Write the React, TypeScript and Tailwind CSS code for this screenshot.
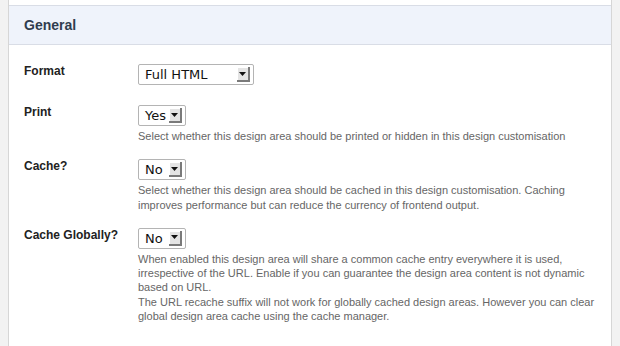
function Select({ value, width }: { value: string; width: string }) {
  return (
    <div
      className={`flex h-[21px] items-center justify-between rounded-[2px] border border-[#b4b4b4] bg-white pl-[6px] pr-[3px] ${width}`}
    >
      <span className="text-[13px] leading-none text-[#111] [font-family:'DejaVu_Sans',sans-serif]">
        {value}
      </span>
      <span className="flex h-[15px] w-[13px] items-center justify-center border-r-2 border-b-2 border-[#7a7a7a] bg-[#e4e4e4] shadow-[inset_1px_1px_0_#fff]">
        <svg width="7" height="4" viewBox="0 0 7 4">
          <path d="M0 0h7L3.5 4z" fill="#111" />
        </svg>
      </span>
    </div>
  );
}

interface RowProps {
  label: string;
  value: string;
  width: string;
  help?: string[];
}

function Row({ label, value, width, help }: RowProps) {
  return (
    <div className="flex">
      <div className="w-[114px] shrink-0 text-[12px] leading-[14px] font-bold text-[#222]">{label}</div>
      <div className="flex-1">
        <Select value={value} width={width} />
        {help && (
          <div className="mt-[3px] text-[11px] leading-[14.3px] text-[#666]">
            {help.map((line, i) => (
              <p key={i}>{line}</p>
            ))}
          </div>
        )}
      </div>
    </div>
  );
}

export default function App() {
  return (
    <div className="flex h-[346px] w-[620px] bg-[#f2f2f2] [font-family:'Liberation_Sans',Arial,sans-serif]">
      <div className="ml-[8px] mr-[8px] flex-1 border-x border-[#d6d6d6] bg-white pt-[5px]">
        <div className="flex h-[40px] items-center border-y border-[#d9dde6] bg-[#eff3fb] px-[15px]">
          <h2 className="pt-[1px] text-[14px] font-bold text-[#2f3d4f]">General</h2>
        </div>
        <div className="flex flex-col pl-[15px] pr-[16px] pt-[19px]">
          <div className="mb-[20px]">
            <Row label="Format" value="Full HTML" width="w-[116px]" />
          </div>
          <div className="mb-[16px]">
            <Row
              label="Print"
              value="Yes"
              width="w-[48px]"
              help={["Select whether this design area should be printed or hidden in this design customisation"]}
            />
          </div>
          <div className="mb-[16px]">
            <Row
              label="Cache?"
              value="No"
              width="w-[48px]"
              help={[
                "Select whether this design area should be cached in this design customisation. Caching improves performance but can reduce the currency of frontend output.",
              ]}
            />
          </div>
          <Row
            label="Cache Globally?"
            value="No"
            width="w-[48px]"
            help={[
              "When enabled this design area will share a common cache entry everywhere it is used, irrespective of the URL. Enable if you can guarantee the design area content is not dynamic based on URL.",
              "The URL recache suffix will not work for globally cached design areas. However you can clear global design area cache using the cache manager.",
            ]}
          />
        </div>
      </div>
    </div>
  );
}
